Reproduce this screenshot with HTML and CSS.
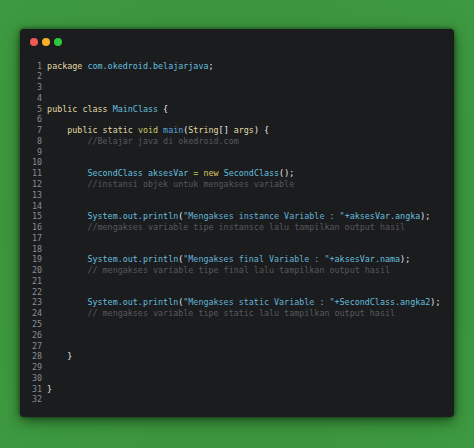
FILE: index.html
```html
<!DOCTYPE html>
<html>
<head>
<meta charset="utf-8">
<link rel="stylesheet" href="styles.css">
</head>
<body>
<div class="window">
  <div class="titlebar">
    <span class="dot red"></span><span class="dot yellow"></span><span class="dot green"></span>
  </div>
  <div class="code">
    <div class="ln"><span class="no">1</span><span class="kw">package</span> <span class="id">com.okedroid.belajarjava</span><span class="pn">;</span></div>
    <div class="ln"><span class="no">2</span></div>
    <div class="ln"><span class="no">3</span></div>
    <div class="ln"><span class="no">4</span></div>
    <div class="ln"><span class="no">5</span><span class="kw">public class</span> <span class="id">MainClass</span> <span class="pn">{</span></div>
    <div class="ln"><span class="no">6</span></div>
    <div class="ln"><span class="no">7</span>    <span class="kw">public static</span> <span class="ty">void</span> <span class="fn">main</span><span class="pn">(</span><span class="kw">String</span><span class="pn">[]</span> <span class="kw">args</span><span class="pn">) {</span></div>
    <div class="ln"><span class="no">8</span>        <span class="cm">//Belajar java di okedroid.com</span></div>
    <div class="ln"><span class="no">9</span></div>
    <div class="ln"><span class="no">10</span></div>
    <div class="ln"><span class="no">11</span>        <span class="id">SecondClass aksesVar</span> <span class="op">=</span> <span class="nw">new</span> <span class="id">SecondClass</span><span class="pn">();</span></div>
    <div class="ln"><span class="no">12</span>        <span class="cm">//instansi objek untuk mengakses variable</span></div>
    <div class="ln"><span class="no">13</span></div>
    <div class="ln"><span class="no">14</span></div>
    <div class="ln"><span class="no">15</span>        <span class="id">System.out.println</span><span class="pn">(</span><span class="st">"Mengakses instance Variable : "</span><span class="id">+aksesVar.angka</span><span class="pn">);</span></div>
    <div class="ln"><span class="no">16</span>        <span class="cm">//mengakses variable tipe instansce lalu tampilkan output hasil</span></div>
    <div class="ln"><span class="no">17</span></div>
    <div class="ln"><span class="no">18</span></div>
    <div class="ln"><span class="no">19</span>        <span class="id">System.out.println</span><span class="pn">(</span><span class="st">"Mengakses final Variable : "</span><span class="id">+aksesVar.nama</span><span class="pn">);</span></div>
    <div class="ln"><span class="no">20</span>        <span class="cm">// mengakses variable tipe final lalu tampilkan output hasil</span></div>
    <div class="ln"><span class="no">21</span></div>
    <div class="ln"><span class="no">22</span></div>
    <div class="ln"><span class="no">23</span>        <span class="id">System.out.println</span><span class="pn">(</span><span class="st">"Mengakses static Variable : "</span><span class="id">+SecondClass.angka2</span><span class="pn">);</span></div>
    <div class="ln"><span class="no">24</span>        <span class="cm">// mengakses variable tipe static lalu tampilkan output hasil</span></div>
    <div class="ln"><span class="no">25</span></div>
    <div class="ln"><span class="no">26</span></div>
    <div class="ln"><span class="no">27</span></div>
    <div class="ln"><span class="no">28</span>    <span class="pn">}</span></div>
    <div class="ln"><span class="no">29</span></div>
    <div class="ln"><span class="no">30</span></div>
    <div class="ln"><span class="no">31</span><span class="pn">}</span></div>
    <div class="ln"><span class="no">32</span></div>
  </div>
</div>
</body>
</html>
```
FILE: styles.css
```css
html, body {
  margin: 0;
  padding: 0;
}
body {
  width: 474px;
  height: 448px;
  background: radial-gradient(ellipse at 50% 50%, #3a903c 0%, #3c963e 70%, #3d9a40 100%);
  padding: 29px 20px 0 20px;
  box-sizing: border-box;
  overflow: hidden;
}
.window {
  width: 434px;
  height: 388px;
  background: #1b1c1e;
  border-radius: 4px;
  box-shadow: 0 4px 14px rgba(0, 20, 0, 0.55), 0 0 4px rgba(0, 0, 0, 0.5);
  box-sizing: border-box;
  padding: 9px 0 0 10px;
}
.titlebar {
  display: flex;
  gap: 4px;
  height: 8px;
}
.dot {
  width: 8px;
  height: 8px;
  border-radius: 50%;
}
.red { background: #f45a55; }
.yellow { background: #f8b02c; }
.green { background: #2dc83c; }
.code {
  margin-top: 14.6px;
  padding-left: 2px;
  font-family: "DejaVu Sans Mono", monospace;
  font-size: 8.4px;
  line-height: 10.77px;
  color: #e8e8e8;
}
.ln {
  height: 10.77px;
  white-space: pre;
}
.no {
  display: inline-block;
  width: 2ch;
  text-align: right;
  margin-right: 1ch;
  color: #8a8d8f;
}
.kw { color: #e2d8a6; }
.ty { color: #c8d06c; }
.nw { color: #d8c75e; }
.op { color: #b9c23f; }
.fn { color: #5aa6dc; }
.id { color: #66bedf; }
.st { color: #66b2d6; }
.pn { color: #eaeaea; }
.cm { color: #56595c; }
```
